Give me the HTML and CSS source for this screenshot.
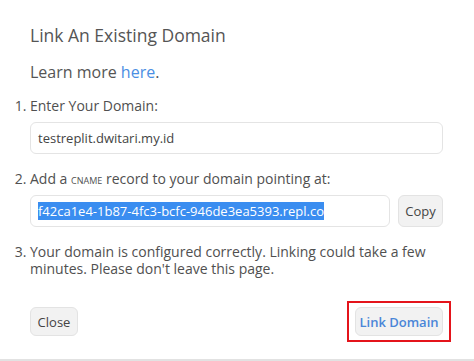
FILE: index.html
```html
<!DOCTYPE html>
<html>
<head>
<meta charset="utf-8">
<link rel="stylesheet" href="styles.css">
</head>
<body>
<div class="modal">
  <h1 class="title">Link An Existing Domain</h1>
  <p class="learn">Learn more <a class="link" href="#">here</a>.</p>
  <ol class="steps">
    <li class="step">
      <div class="label">Enter Your Domain:</div>
      <div class="field"><span class="value">testreplit.dwitari.my.id</span></div>
    </li>
    <li class="step">
      <div class="label">Add a <span class="smallcaps">cname</span> record to your domain pointing at:</div>
      <div class="row">
        <div class="field grow"><span class="value selected">f42ca1e4-1b87-4fc3-bcfc-946de3ea5393.repl.co</span></div>
        <button class="btn copy">Copy</button>
      </div>
    </li>
    <li class="step">
      <div class="label multi">Your domain is configured correctly. Linking could take a few minutes. Please don't leave this page.</div>
    </li>
  </ol>
  <div class="footer">
    <button class="btn close">Close</button>
    <div class="highlight"><button class="btn primary">Link Domain</button></div>
  </div>
</div>
<div class="edge"></div>
</body>
</html>
```

FILE: styles.css
```css
html, body {
  margin: 0;
  padding: 0;
  background: #ffffff;
}
body {
  width: 474px;
  height: 361px;
  overflow: hidden;
  position: relative;
  font-family: "Open Sans", "Noto Sans", sans-serif;
  color: #505050;
}
.modal {
  padding: 23px 31px 0 30px;
}
.title {
  margin: 0;
  font-size: 17.5px;
  line-height: 24px;
  font-weight: 400;
  color: #555;
}
.learn {
  margin: 14px 0 0 0;
  font-size: 16px;
  line-height: 22px;
  color: #555;
}
.link {
  color: #4a8ee3;
  text-decoration: none;
}
.steps {
  margin: 13px 0 0 0;
  padding: 0;
  list-style-position: outside;
  font-size: 14px;
  color: #505050;
}
.step {
  margin: 0 0 15px 0;
}
.label {
  line-height: 20px;
}
.label.multi {
  line-height: 17px;
}
.smallcaps {
  font-variant: small-caps;
  font-size: 13px;
}
.field {
  margin-top: 6px;
  height: 32px;
  box-sizing: border-box;
  border: 1px solid #e4e4e4;
  border-radius: 6px;
  display: flex;
  align-items: center;
  padding: 0 7px;
  font-size: 13px;
  color: #444;
}
.row {
  display: flex;
  gap: 8px;
  margin-top: 6px;
}
.row .field {
  margin-top: 0;
}
.grow {
  flex: 1;
}
.selected {
  background: #3a8df0;
  color: #fff;
  line-height: 18px;
}
.btn {
  font-family: "Open Sans", "Noto Sans", sans-serif;
  font-size: 13px;
  background: #f2f2f2;
  border: 1px solid #e3e3e3;
  border-radius: 6px;
  color: #444;
  padding: 0 8px;
  font-weight: 500;
}
.copy {
  height: 32px;
  width: 45px;
  padding: 0;
}
.footer {
  margin-top: 24px;
  display: flex;
  justify-content: space-between;
  align-items: center;
}
.close {
  height: 29px;
  width: 48px;
  padding: 0;
}
.highlight {
  border: 2px solid #e4141b;
  padding: 4px 6px;
  margin-right: -8px;
}
.primary {
  height: 29px;
  width: 88px;
  padding: 0;
  color: #4a86d8;
  font-weight: 600;
}
.edge {
  position: absolute;
  left: 0;
  right: 0;
  bottom: 0;
  height: 2px;
  background: #e2e2e2;
}
```
